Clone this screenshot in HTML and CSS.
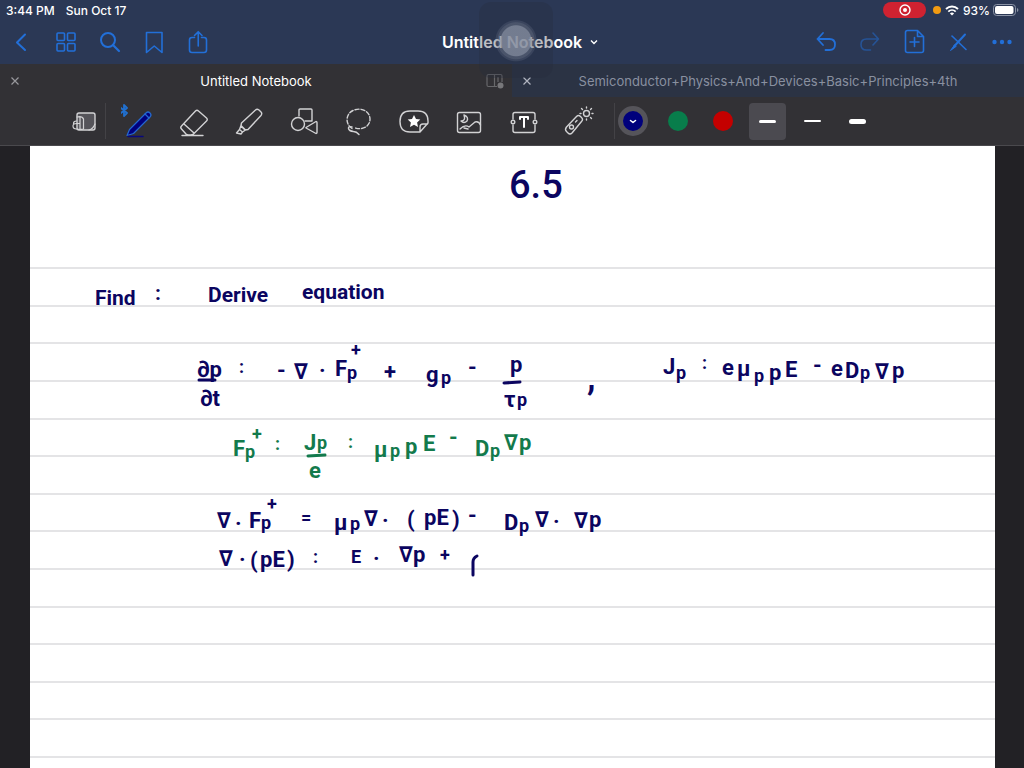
FILE: index.html
```html
<!DOCTYPE html>
<html lang="en">
<head>
<meta charset="utf-8">
<title>Untitled Notebook</title>
<link rel="stylesheet" href="styles.css">
</head>
<body>
<header class="top">
  <div class="status">
    <span class="time">3:44 PM</span>
    <span class="date">Sun Oct 17</span>
    <span class="recording"><svg width="14" height="14" viewBox="0 0 14 14"><circle cx="7" cy="7" r="5" fill="none" stroke="#fff" stroke-width="1.4"/><circle cx="7" cy="7" r="2" fill="#fff"/></svg></span>
    <span class="mic-dot"></span>
    <svg width="14" height="11" viewBox="0 0 14 11" fill="none" stroke="#fff" stroke-width="1.9"><path d="M1 4a8.6 8.6 0 0 1 12 0M3.3 6.6a5.4 5.4 0 0 1 7.4 0"/><path d="M7 10.6 4.9 8.4a3.1 3.1 0 0 1 4.2 0Z" fill="#fff" stroke="none"/></svg>
    <span class="percent">93%</span>
    <svg class="battery" width="26" height="12" viewBox="0 0 26 12"><rect x=".5" y=".5" width="22" height="11" rx="3.2" fill="none" stroke="#8a93a6"/><rect x="2" y="2" width="18.5" height="8" rx="2" fill="#fff"/><path d="M24 4v4q1.4-.6 1.4-2T24 4" fill="#8a93a6"/></svg>
  </div>
  <nav class="nav">
    <div class="group">
      <button aria-label="Back"><svg viewBox="0 0 28 28"><path d="M17 6.500 9 14.500l8 7.500" stroke-width="2"/></svg></button>
      <button aria-label="Thumbnails"><svg viewBox="0 0 28 28"><rect x="5" y="5" width="7.500" height="7.500" rx="1"/><rect x="15.500" y="5" width="7.500" height="7.500" rx="1"/><rect x="5" y="15.500" width="7.500" height="7.500" rx="1"/><rect x="15.500" y="15.500" width="7.500" height="7.500" rx="1"/></svg></button>
      <button aria-label="Search"><svg viewBox="0 0 28 28"><circle cx="12" cy="12" r="7" stroke-width="2"/><path d="m17 17 6 6" stroke-width="2.200"/></svg></button>
      <button aria-label="Bookmark"><svg viewBox="0 0 28 28"><path d="M6.500 4.500h15.500v20l-7.750-6.500-7.750 6.500Z"/></svg></button>
      <button aria-label="Share"><svg viewBox="0 0 28 28"><path d="M10.500 9.500H8q-2.500 0-2.500 2.500v10q0 2.500 2.500 2.500h12q2.500 0 2.500-2.500V12q0-2.500-2.500-2.500h-2.500M14.250 18V4M10.500 7.500 14.250 3.700 18 7.500"/></svg></button>
    </div>
    <button class="title"><span>Untitled Notebook</span><svg class="chevron" viewBox="0 0 8 6"><path d="m1 1.500 3 3 3-3"/></svg></button>
    <div class="group end">
      <button aria-label="Undo"><svg viewBox="0 0 28 28"><path d="M11 5 5.500 11l5.500 6M5.500 11h12q5.500 0 5.500 5.500t-5.500 5.500h-4" stroke-width="1.800"/></svg></button>
      <button aria-label="Redo" class="dim"><svg viewBox="0 0 28 28"><path d="m17 5 5.500 6-5.500 6M22.500 11h-12q-5.500 0-5.500 5.500t5.500 5.500h4"/></svg></button>
      <button aria-label="Add page"><svg viewBox="0 0 28 28"><path d="M7.500 2.500h10l6 6v14q0 2-2 2h-14q-2 0-2-2v-18q0-2 2-2M17.500 2.500v6h6M14.500 9.500v9M10 14h9"/></svg></button>
      <button aria-label="Read only"><svg viewBox="0 0 28 28"><path d="m8 8 14 13.500"/><path d="m21 6.500-11 12" stroke-width="2"/><path d="m10.500 17-4 5.500 5.500-4Z" fill="currentColor" stroke-width="1"/></svg></button>
      <button aria-label="More"><svg viewBox="0 0 28 28" class="solid"><circle cx="6.500" cy="14" r="2.200"/><circle cx="14" cy="14" r="2.200"/><circle cx="21.500" cy="14" r="2.200"/></svg></button>
    </div>
  </nav>
  <span class="touch"></span>
</header>
<div class="tabs">
  <div class="tab active">
    <button aria-label="Close tab"><svg width="10" height="10" viewBox="0 0 10 10"><path d="m1.500 1.500 7 7m0-7-7 7"/></svg></button>
    <span class="name">Untitled Notebook</span>
    <button aria-label="Split view" class="split"><svg width="18" height="16" viewBox="0 0 18 16"><path d="M11 13.500H2.500q-1.500 0-1.500-1.500V3q0-1.500 1.500-1.500h12q1.500 0 1.500 1.500v6M8.500 1.500v12M12 4v5"/><circle cx="14.500" cy="12.500" r="3" fill="#77777a" stroke="none"/></svg></button>
  </div>
  <div class="tab other">
    <button aria-label="Close tab"><svg width="10" height="10" viewBox="0 0 10 10"><path d="m1.500 1.500 7 7m0-7-7 7"/></svg></button>
    <span class="name">Semiconductor+Physics+And+Devices+Basic+Principles+4th</span>
  </div>
</div>
<div class="tools" role="toolbar" aria-label="Drawing tools">
  <button aria-label="Zoom window"><svg viewBox="0 0 32 32"><path d="M9 10q0-2 2-2h14q2 0 2 2v13q0 2-2 2H11q-2 0-2-2Z" fill="#55545a"/><path d="M5.500 18.500q0-2.500 3-2.500M9 12q5-1.500 6.500 2V24q-4 1-7 0-3.500 0-3.500-3 0-2.500 3.500-2.500h3M12 12v12M21 25q4-1 6-6" stroke-width="1.200"/></svg></button>
  <i class="divider first"></i>
  <button aria-label="Pen"><svg class="pen" viewBox="0 0 36 36"><path d="M0 5 6 10 3 13V2l3 3L0 10" stroke="#2170cf" stroke-width="1.800"/><path d="M6 32.500 8.500 26.500 25 10Q27 8 29 10t0 4L12.500 30.500Z" fill="#00007d" stroke="#2467cf" stroke-width="1.200"/><path d="m24 11 4 4" stroke="#2467cf" stroke-width="1.200"/><path d="M7 33.500h15" stroke="#08087c" stroke-width="1.500"/></svg></button>
  <button aria-label="Eraser"><svg viewBox="0 0 32 32"><path d="m3.500 21 14-15q1.500-1.500 3 0l8 7q1.500 1.500 0 3l-13 13q-1 1-3 1h-2q-1.500 0-2.500-1l-4.500-5q-1.500-1.500 0-3ZM6 19l10 9M4 30.500h21"/></svg></button>
  <button aria-label="Highlighter"><svg viewBox="0 0 32 32"><path d="m8.500 18 14-13q1.500-1.500 3.500 0l2 2q1.500 1.500 0 3.500l-13 14-3 .500-4-4ZM8.500 18l-.5 2.500 4.500 4.500M8 20.500l-1.500 4 3 2.500 3-2M6.500 24.500 3.500 28l4.500 1 1.500-2"/></svg></button>
  <button aria-label="Shapes"><svg viewBox="0 0 32 32"><path d="M11 11V5q0-1 1-1h11q1 0 1 1v11H17"/><circle cx="10" cy="19" r="6.500"/><path d="m18 22.500 10-6q1 0 1 1v10q0 1-1 1l-10-5.500Z"/></svg></button>
  <button aria-label="Lasso"><svg viewBox="0 0 32 32"><path d="M9 23.500C2 19 2.500 9 10 5.500s17 0 17 9c-.500 8-9 11-16 8" stroke-dasharray="4 2"/><path d="M9 22q-4-1-3.500 1.500t5 3q3 0 5.500 3"/></svg></button>
  <button aria-label="Stickers"><svg viewBox="0 0 32 32"><path d="M12 6h8q10 0 10 10v2l-8 9H12Q2 27 2 16.500T12 6M22 27v-5q0-3 3-3h4.500"/><path d="m16 10 2 4 4.300.500-3.200 3 .9 4.500-4-2.300L12 22l.9-4.500-3.200-3L14 14Z" fill="#fff" stroke="none"/></svg></button>
  <button aria-label="Image"><svg viewBox="0 0 32 32"><rect x="4.500" y="7.500" width="23" height="20" rx="2"/><path d="M11 10q5 2 3 6-3 3-6 0 5 0 3-6M7 24q5-5 9-2l6-5q4-1 5.500 3M11 23l4 1"/></svg></button>
  <button aria-label="Text"><svg viewBox="0 0 32 32"><path d="M5 14V9.500q0-2 2-2h18q2 0 2 2V14M27 20v5.500q0 2-2 2H7q-2 0-2-2V20"/><circle cx="5" cy="17" r="1.800"/><circle cx="27" cy="17" r="1.800"/><path d="M12 14v-2h8v2M16 12v10" stroke="#fff" stroke-width="2"/></svg></button>
  <button aria-label="Laser pointer"><svg viewBox="0 0 32 32"><path d="m3.500 22 10-10.500q2-2 4 0l1 1q2 2 0 4L9 28q-2 2-4 0l-1.500-1.500q-2-2 0-4.500Z"/><circle cx="8.500" cy="22" r="2"/><path d="m12.500 17 1.500-1.500"/><circle cx="23.500" cy="8.500" r="3"/><path d="M23.500 3V2m0 13v-1M29 8.500h1M27.500 4.500l1-1M27.500 12.500l1 1M19.500 4.500l-1-1M18 8.500h-1"/></svg></button>
  <i class="divider second"></i>
  <button class="swatch" aria-label="Navy, selected"><svg viewBox="0 0 32 32"><circle cx="16" cy="16" r="12.500" fill="#00007c" stroke="#55545a" stroke-width="5"/><path d="m13.500 15.500 2.500 2 2.500-2" stroke="#fff" stroke-width="1.600"/></svg></button>
  <button class="swatch" aria-label="Green"><svg viewBox="0 0 32 32"><circle cx="16" cy="16" r="10" fill="#087d4b" stroke="none"/></svg></button>
  <button class="swatch" aria-label="Red"><svg viewBox="0 0 32 32"><circle cx="16" cy="16" r="10" fill="#c40000" stroke="none"/></svg></button>
  <button class="swatch" aria-label="Medium stroke" aria-pressed="true"><span class="stroke medium"></span></button>
  <button class="swatch" aria-label="Thin stroke"><span class="stroke thin"></span></button>
  <button class="swatch" aria-label="Thick stroke"><span class="stroke thick"></span></button>
</div>
<main class="desk">
  <svg class="page" viewBox="30 146 965 622" preserveAspectRatio="xMidYMin slice">
    <path class="rule" d="M30 268h965M30 306h965M30 343h965M30 381h965M30 419h965M30 456h965M30 494h965M30 531h965M30 569h965M30 607h965M30 644h965M30 682h965M30 719h965M30 757h965"/>
    <g class="ink">
      <text class="huge" x="509" y="198">6.5</text>
      <text class="word" x="95" y="305">Find</text><text class="word" x="155" y="300">:</text>
      <text class="word" x="208" y="302">Derive</text>
      <text class="word" x="302" y="299">equation</text>
      <text x="197" y="377">∂p</text><path d="M199 380h16"/><text x="200" y="406">∂t</text>
      <text class="sub" x="239" y="373">:</text>
      <text x="277" y="378">-</text><text class="nabla" x="294" y="379">∇</text><text x="319" y="378">·</text>
      <text x="335" y="376">F</text><text class="sub" x="347" y="379">p</text><text class="sub" x="351" y="356">+</text>
      <text x="384" y="379">+</text>
      <text x="426" y="382">g</text><text class="sub" x="441" y="384">p</text><text x="468" y="375">-</text>
      <text x="510" y="372">p</text><path d="M504 383l16-1"/><text x="504" y="407">τ</text><text class="sub" x="517" y="406">p</text>
      <text class="huge" x="587" y="389">,</text>
      <text x="663" y="374">J</text><text class="sub" x="676" y="379">p</text><text class="sub" x="702" y="369">:</text>
      <text x="722" y="375">e</text><text x="737" y="376">μ</text><text class="sub" x="754" y="382">p</text><text x="769" y="380">p</text><text x="785" y="377">E</text>
      <text x="813" y="373">-</text><text x="831" y="376">e</text><text x="845" y="378">D</text><text class="sub" x="860" y="379">p</text><text class="nabla" x="875" y="379">∇</text><text x="892" y="378">p</text>
      <g class="green">
        <text x="233" y="456">F</text><text class="sub" x="245" y="458">p</text><text class="sub" x="252" y="440">+</text><text class="sub" x="275" y="450">:</text>
        <text x="304" y="450">J</text><text class="sub" x="317" y="449">p</text><path d="M308 456l17-1"/><text x="309" y="478">e</text>
        <text class="sub" x="348" y="448">:</text><text x="374" y="457">μ</text><text class="sub" x="390" y="457">p</text><text x="405" y="454">p</text><text x="423" y="451">E</text><text x="449" y="445">-</text>
        <text x="475" y="456">D</text><text class="sub" x="490" y="457">p</text><text class="nabla" x="504" y="450">∇</text><text x="519" y="450">p</text>
      </g>
      <text class="nabla" x="217" y="528">∇</text><text x="235" y="531">·</text><text x="249" y="528">F</text><text class="sub" x="261" y="529">p</text><text class="sub" x="267" y="510">+</text><text class="sub" x="301" y="524">=</text>
      <text x="334" y="530">μ</text><text class="sub" x="350" y="530">p</text><text class="nabla" x="364" y="526">∇</text><text x="382" y="528">·</text><text x="407" y="527">(</text><text x="424" y="525">pE</text><text x="452" y="527">)</text><text x="468" y="523">-</text>
      <text x="504" y="530">D</text><text class="sub" x="519" y="532">p</text><text class="nabla" x="535" y="527">∇</text><text x="553" y="529">·</text><text class="nabla" x="574" y="528">∇</text><text x="589" y="527">p</text>
      <text class="nabla" x="219" y="566">∇</text><text x="239" y="567">·</text><text x="250" y="568">(</text><text x="260" y="567">pE</text><text x="287" y="567">)</text><text class="sub" x="313" y="563">:</text>
      <text class="sub" x="351" y="563">E</text><text x="373" y="566">·</text><text class="nabla" x="399" y="562">∇</text><text x="413" y="562">p</text><text class="sub" x="440" y="561">+</text><path d="M473 575V562q0-4 4-6"/>
    </g>
  </svg>
</main>
</body>
</html>
```

FILE: styles.css
```css
* { box-sizing: border-box; }
body {
  margin: 0;
  height: 100vh;
  display: flex;
  flex-direction: column;
  overflow: hidden;
  background: #222125;
  color: #fff;
  font-family: Inter, "Liberation Sans", sans-serif;
}
button {
  padding: 0;
  border: 0;
  background: none;
  color: inherit;
  font: inherit;
  display: flex;
  align-items: center;
  justify-content: center;
}
svg { display: block; flex: none; }

.top { position: relative; background: #2b3855; }
.status {
  height: 20px;
  padding: 0 5px 0 6px;
  display: flex;
  align-items: center;
  font-size: 12px;
  font-weight: 500;
}
.date { margin-left: 11px; }
.recording {
  margin-left: auto;
  width: 43px;
  height: 16px;
  border-radius: 8px;
  background: #cf2231;
  display: flex;
  align-items: center;
  justify-content: center;
}
.mic-dot {
  width: 8px;
  height: 8px;
  margin: 0 4px 0 7px;
  border-radius: 50%;
  background: #f29b12;
}
.percent { margin: 0 3px 0 4px; }

.nav {
  height: 44px;
  display: grid;
  grid-template-columns: 1fr auto 1fr;
  align-items: center;
  color: #226fd8;
}
.group { display: flex; }
.group.end { justify-content: flex-end; }
.group button { width: 44px; height: 44px; }
.group svg {
  width: 28px;
  height: 28px;
  fill: none;
  stroke: currentColor;
  stroke-width: 1.6;
  stroke-linecap: round;
  stroke-linejoin: round;
}
.group svg.solid { fill: currentColor; stroke: none; }
.dim { opacity: .5; }
.title {
  gap: 8px;
  padding-left: 16px;
  color: #fff;
  font-size: 16px;
  font-weight: 600;
}
.chevron {
  width: 8px;
  height: 6px;
  fill: none;
  stroke: #fff;
  stroke-width: 1.4;
}
/* touch marker floats over the title */
.touch {
  position: absolute;
  z-index: 1;
  left: 50%;
  top: 2px;
  width: 74px;
  height: 76px;
  margin-left: -33px;
  border-radius: 12px;
  background:
    radial-gradient(circle at 50% 51%, rgba(134, 142, 160, .8) 0 15px, rgba(125, 134, 152, .4) 16px 18px, rgba(110, 118, 140, .25) 19px 20px, transparent 21px),
    rgba(36, 42, 60, .3);
  pointer-events: none;
}

.tabs { display: grid; grid-template-columns: 1fr 1fr; height: 33px; font-size: 13px; }
.tab { display: flex; align-items: center; padding: 0 8px; }
.tab button { width: 14px; height: 24px; }
.tab svg { fill: none; stroke: #98989c; stroke-width: 1.2; }
.tab .name { flex: 1; text-align: center; }
.active { background: #323135; }
.active .name { padding-left: 4px; }
.tab .split { width: 18px; }
.split svg { stroke: #68686b; }
.tab.other { padding-right: 22px; background: #2b3344; color: #8990a0; }
.other svg { stroke: #b1b5c0; }

.tools {
  height: 49px;
  padding-left: 56px;
  display: flex;
  align-items: center;
  background: #323135;
  border-bottom: 1px solid #4a494d;
}
.tools button { width: 55px; height: 48px; flex: none; }
.tools svg {
  width: 32px;
  height: 32px;
  fill: none;
  stroke: #d2d2d4;
  stroke-width: 1.4;
  stroke-linecap: round;
  stroke-linejoin: round;
}
.tools svg.pen { width: 36px; height: 36px; }
.divider { width: 1px; height: 36px; flex: none; background: #434246; }
.first { margin: 0 5px 0 -6px; }
.second { margin: 0 -5px 0 8px; }
.tools .swatch { width: 45px; }
.tools .swatch[aria-pressed] {
  width: 37px;
  height: 37px;
  margin: 0 4px;
  border-radius: 4px;
  background: #4b4a50;
}
.stroke { width: 17px; border-radius: 3px; background: #fff; }
.medium { height: 3px; }
.thin { height: 2px; }
.thick { height: 5px; }

.desk { flex: 1; min-height: 0; padding: 0 29px 0 30px; }
.page { width: 100%; height: 100%; background: #fff; }
.rule { stroke: #dcdcde; stroke-width: 1.5; }
.ink {
  fill: #0b0560;
  font-family: Roboto, "DejaVu Sans", sans-serif;
  font-size: 22px;
  font-weight: 700;
}
.ink path { fill: none; stroke: #0b0560; stroke-width: 3; stroke-linecap: round; }
.huge { font-size: 38px; font-weight: 500; }
.word { font-size: 21px; }
.sub { font-size: 18px; }
.nabla { font-size: 22px; font-family: "DejaVu Sans Condensed", "DejaVu Sans", sans-serif; }
.ink .green { fill: #137a4c; }
.ink .green path { stroke: #137a4c; }
```
